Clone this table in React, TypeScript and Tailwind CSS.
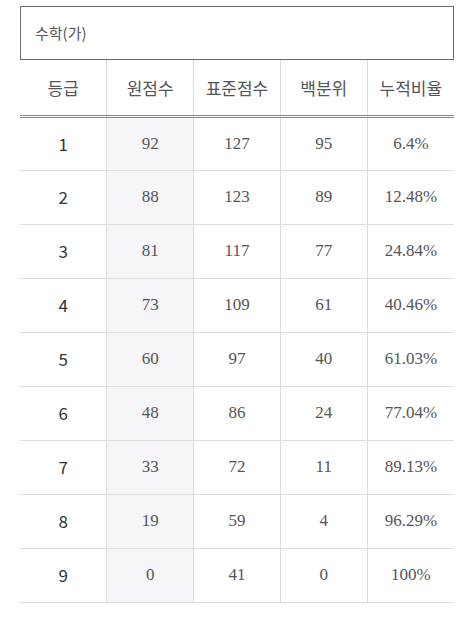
import React from 'react';

const rows = [
  ['1', '92', '127', '95', '6.4%'],
  ['2', '88', '123', '89', '12.48%'],
  ['3', '81', '117', '77', '24.84%'],
  ['4', '73', '109', '61', '40.46%'],
  ['5', '60', '97', '40', '61.03%'],
  ['6', '48', '86', '24', '77.04%'],
  ['7', '33', '72', '11', '89.13%'],
  ['8', '19', '59', '4', '96.29%'],
  ['9', '0', '41', '0', '100%'],
];

const headers = ['등급', '원점수', '표준점수', '백분위', '누적비율'];

const korean = { fontFamily: '"Noto Sans CJK KR", "Noto Sans", sans-serif' };
const serif = { fontFamily: '"Liberation Serif", serif' };

export default function App() {
  return (
    <div className="w-[474px] h-[620px] bg-white pt-[6px] px-[20px]">
      {/* Title */}
      <div
        className="h-[54px] border border-[#6a6a6a] flex items-center pl-[14px] text-[15px] text-[#555]"
        style={korean}
      >
        수학(가)
      </div>

      {/* Table */}
      <table className="w-[434px] table-fixed border-collapse">
        <thead>
          <tr className="h-[56px]">
            {headers.map((h, i) => (
              <th
                key={h}
                className={`font-normal text-[17px] text-[#555] text-center border-b-[3px] border-double border-b-[#888] ${
                  i > 0 ? 'border-l border-l-[#ddd]' : ''
                }`}
                style={korean}
              >
                {h}
              </th>
            ))}
          </tr>
        </thead>
        <tbody>
          {rows.map((r) => (
            <tr key={r[0]} className="h-[54px] border-b border-[#ddd]">
              {r.map((c, i) => (
                <td
                  key={i}
                  className={`text-center text-[17px] ${i === 0 ? 'text-[#333]' : 'text-[#555]'} ${
                    i === 1 ? 'bg-[#f6f6fa]' : ''
                  } ${i > 0 ? 'border-l border-[#ddd]' : ''}`}
                  style={i === 0 ? korean : serif}
                >
                  {c}
                </td>
              ))}
            </tr>
          ))}
        </tbody>
      </table>
    </div>
  );
}
